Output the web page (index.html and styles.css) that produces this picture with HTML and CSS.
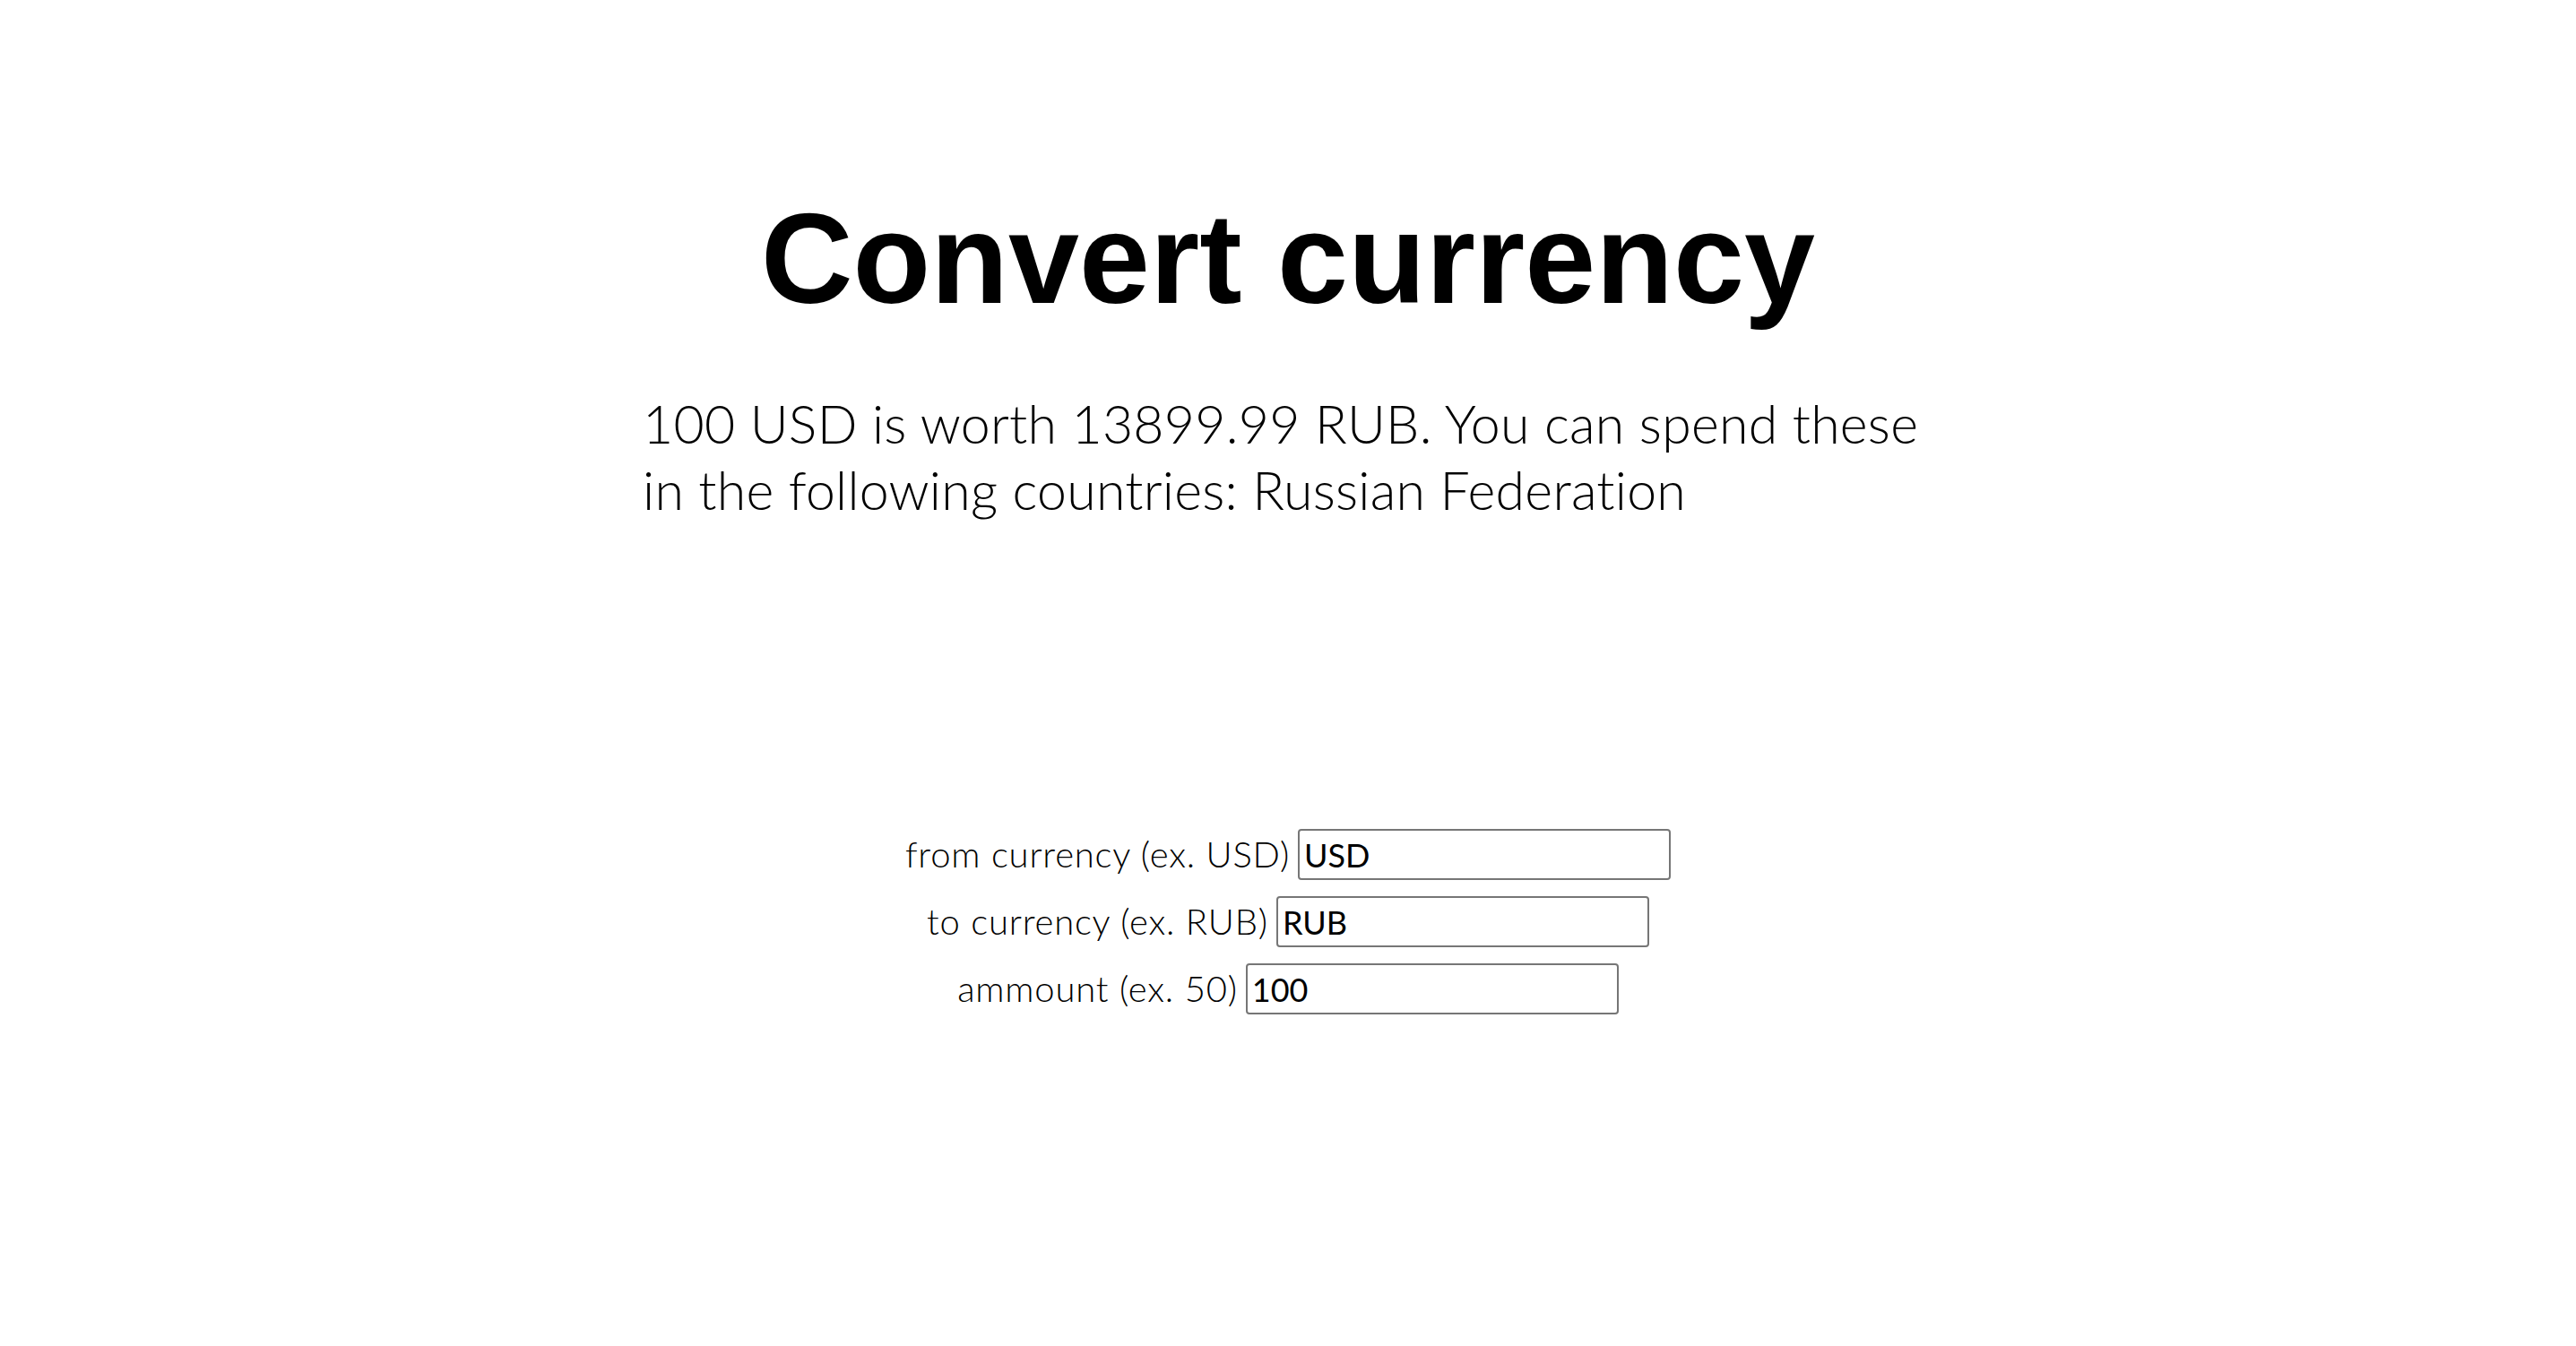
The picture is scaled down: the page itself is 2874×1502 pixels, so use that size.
FILE: index.html
```html
<!DOCTYPE html>
<html lang="en">
<head>
  <meta charset="UTF-8" />
  <title>Convert currency</title>
  <link rel="stylesheet" href="styles.css">
</head>
<body>

<div class="converter">
  <h1>Convert currency</h1>

  <p class="result">100 USD is worth 13899.99 RUB. You can spend these in the following countries: Russian Federation</p>

  <form class="convert-form" onsubmit="return false">
    <div class="form-row">
      <label for="fromCurrency">from currency (ex. USD)</label>
      <input type="text" id="fromCurrency" value="USD">
    </div>
    <div class="form-row">
      <label for="toCurrency">to currency (ex. RUB)</label>
      <input type="text" id="toCurrency" value="RUB">
    </div>
    <div class="form-row">
      <label for="ammount">ammount (ex. 50)</label>
      <input type="text" id="ammount" value="100">
    </div>
  </form>
</div>

</body>
</html>
```

FILE: styles.css
```css
body {
  margin: 0;
  background-color: #ffffff;
  color: #000000;
  font-family: 'Lato', 'Open Sans', sans-serif;
  font-weight: 300;
}

.converter {
  padding-top: 207px;
}

h1 {
  margin: 0;
  text-align: center;
  font-family: 'Liberation Sans', Arial, sans-serif;
  font-size: 142px;
  line-height: 163px;
  font-weight: 700;
}

.result {
  width: 1440px;
  margin: 66px auto 0;
  font-size: 59px;
  line-height: 74px;
  letter-spacing: 0.25px;
}

.convert-form {
  margin-top: 341px;
}

.form-row {
  display: flex;
  justify-content: center;
  align-items: baseline;
  gap: 9px;
  margin-bottom: 18px;
}

label {
  font-size: 40px;
  letter-spacing: 0.8px;
}

input {
  box-sizing: border-box;
  width: 416px;
  height: 57px;
  padding: 0 5px;
  border: 2px solid #767676;
  border-radius: 4px;
  font-family: 'Lato', sans-serif;
  font-size: 36px;
  color: #000000;
}
```
